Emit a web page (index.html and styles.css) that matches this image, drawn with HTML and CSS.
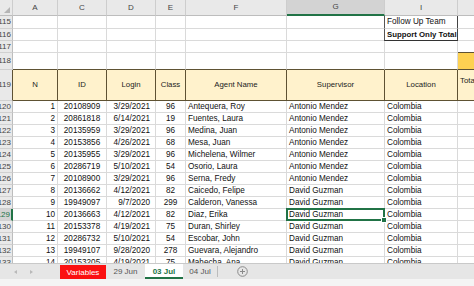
FILE: index.html
```html
<!DOCTYPE html>
<html lang="en">
<head>
    <meta charset="UTF-8">
    <meta name="viewport" content="width=device-width, initial-scale=1.0">
    <title>Follow Up - 03 Jul</title>
    <link rel="stylesheet" href="styles.css">
</head>
<body>
    <div class="book">
        <div class="sheet">
            <div class="row cols">
                <div class="corner"><span class="tri"></span></div>
                <div>A</div><div>C</div><div>D</div><div>E</div><div>F</div>
                <div class="sel">G</div><div>I</div><div></div>
            </div>

            <div class="row h13">
                <div class="rh">115</div>
                <div></div><div></div><div></div><div></div><div></div><div></div>
                <div class="tx box">Follow Up Team</div><div></div>
            </div>
            <div class="row">
                <div class="rh">116</div>
                <div></div><div></div><div></div><div></div><div></div><div></div>
                <div class="tx box strong">Support Only Total</div><div></div>
            </div>
            <div class="row">
                <div class="rh">117</div>
                <div></div><div></div><div></div><div></div><div></div><div></div><div></div>
                <div class="total-top"></div>
            </div>
            <div class="row h17 above-head">
                <div class="rh">118</div>
                <div></div><div></div><div></div><div></div><div></div><div></div><div></div>
                <div class="total"></div>
            </div>
            <div class="row h31 head">
                <div class="rh">119</div>
                <div>N</div><div>ID</div><div>Login</div><div>Class</div>
                <div>Agent Name</div><div>Supervisor</div><div>Location</div>
                <div class="total label">Total Hours</div>
            </div>

            <div class="row">
                <div class="rh">120</div>
                <div class="n">1</div><div class="id">20108909</div><div class="dt">3/29/2021</div><div class="cl">96</div>
                <div class="tx">Antequera, Roy</div><div class="tx">Antonio Mendez</div><div class="tx">Colombia</div><div></div>
            </div>
            <div class="row">
                <div class="rh">121</div>
                <div class="n">2</div><div class="id">20861818</div><div class="dt">6/14/2021</div><div class="cl">19</div>
                <div class="tx">Fuentes, Laura</div><div class="tx">Antonio Mendez</div><div class="tx">Colombia</div><div></div>
            </div>
            <div class="row">
                <div class="rh">122</div>
                <div class="n">3</div><div class="id">20135959</div><div class="dt">3/29/2021</div><div class="cl">96</div>
                <div class="tx">Medina, Juan</div><div class="tx">Antonio Mendez</div><div class="tx">Colombia</div><div></div>
            </div>
            <div class="row">
                <div class="rh">123</div>
                <div class="n">4</div><div class="id">20153856</div><div class="dt">4/26/2021</div><div class="cl">68</div>
                <div class="tx">Mesa, Juan</div><div class="tx">Antonio Mendez</div><div class="tx">Colombia</div><div></div>
            </div>
            <div class="row">
                <div class="rh">124</div>
                <div class="n">5</div><div class="id">20135955</div><div class="dt">3/29/2021</div><div class="cl">96</div>
                <div class="tx">Michelena, Wilmer</div><div class="tx">Antonio Mendez</div><div class="tx">Colombia</div><div></div>
            </div>
            <div class="row">
                <div class="rh">125</div>
                <div class="n">6</div><div class="id">20286719</div><div class="dt">5/10/2021</div><div class="cl">54</div>
                <div class="tx">Osorio, Laura</div><div class="tx">Antonio Mendez</div><div class="tx">Colombia</div><div></div>
            </div>
            <div class="row">
                <div class="rh">126</div>
                <div class="n">7</div><div class="id">20108900</div><div class="dt">3/29/2021</div><div class="cl">96</div>
                <div class="tx">Serna, Fredy</div><div class="tx">Antonio Mendez</div><div class="tx">Colombia</div><div></div>
            </div>
            <div class="row">
                <div class="rh">127</div>
                <div class="n">8</div><div class="id">20136662</div><div class="dt">4/12/2021</div><div class="cl">82</div>
                <div class="tx">Caicedo, Felipe</div><div class="tx">David Guzman</div><div class="tx">Colombia</div><div></div>
            </div>
            <div class="row">
                <div class="rh">128</div>
                <div class="n">9</div><div class="id">19949097</div><div class="dt">9/7/2020</div><div class="cl">299</div>
                <div class="tx">Calderon, Vanessa</div><div class="tx">David Guzman</div><div class="tx">Colombia</div><div></div>
            </div>
            <div class="row">
                <div class="rh sel">129</div>
                <div class="n">10</div><div class="id">20136663</div><div class="dt">4/12/2021</div><div class="cl">82</div>
                <div class="tx">Diaz, Erika</div><div class="tx cur">David Guzman</div><div class="tx">Colombia</div><div></div>
            </div>
            <div class="row">
                <div class="rh">130</div>
                <div class="n">11</div><div class="id">20153378</div><div class="dt">4/19/2021</div><div class="cl">75</div>
                <div class="tx">Duran, Shirley</div><div class="tx">David Guzman</div><div class="tx">Colombia</div><div></div>
            </div>
            <div class="row">
                <div class="rh">131</div>
                <div class="n">12</div><div class="id">20286732</div><div class="dt">5/10/2021</div><div class="cl">54</div>
                <div class="tx">Escobar, John</div><div class="tx">David Guzman</div><div class="tx">Colombia</div><div></div>
            </div>
            <div class="row">
                <div class="rh">132</div>
                <div class="n">13</div><div class="id">19949107</div><div class="dt">9/28/2020</div><div class="cl">278</div>
                <div class="tx">Guevara, Alejandro</div><div class="tx">David Guzman</div><div class="tx">Colombia</div><div></div>
            </div>
            <div class="row">
                <div class="rh">133</div>
                <div class="n">14</div><div class="id">20153205</div><div class="dt">4/19/2021</div><div class="cl">75</div>
                <div class="tx">Mahecha, Ana</div><div class="tx">David Guzman</div><div class="tx">Colombia</div><div></div>
            </div>
        </div>

        <div class="tabbar">
            <div class="strip">
                <div class="nav"><span class="arr left"></span><span class="arr right"></span></div>
                <div class="tab red">Variables</div>
                <div class="tab t29">29 Jun</div>
                <div class="tab active">03 Jul</div>
                <div class="tab t04">04 Jul</div>
                <div class="add">
                    <svg width="11" height="11" viewBox="0 0 11 11">
                        <circle cx="5.5" cy="5.5" r="4.8" fill="none" stroke="#8a8a8a" stroke-width="1"/>
                        <path d="M5.5 3v5M3 5.5h5" stroke="#8a8a8a" stroke-width="1"/>
                    </svg>
                </div>
            </div>
            <div class="status"></div>
        </div>
    </div>
</body>
</html>
```

FILE: styles.css
```css
* {
    box-sizing: border-box;
}

body {
    margin: 0;
    font-family: "Liberation Sans", Arial, sans-serif;
    background-color: #fff;
}

.book {
    width: 474px;
    height: 286px;
    overflow: hidden;
    display: flex;
    flex-direction: column;
}

.sheet {
    height: 263px;
    flex: none;
    overflow: hidden;
}

.row {
    display: grid;
    grid-template-columns: 13px 45px 49px 49px 30px 101px 98px 73px 80px;
    height: 12px;
}

.row > div {
    display: flex;
    align-items: center;
    overflow: hidden;
    white-space: nowrap;
    border-right: 1px solid #dadada;
    border-bottom: 1px solid #dadada;
    font-size: 8.2px;
    line-height: 10px;
    color: #111;
}

.h13 { height: 13px; }
.h17 { height: 17px; }
.h31 { height: 31px; }

/* column letters */
.cols {
    height: 16px;
}

.cols > div {
    justify-content: center;
    background-color: #e9e9e9;
    border-right-color: #cdcdcd;
    border-bottom-color: #bdbdbd;
    color: #444;
    font-size: 8px;
}

.cols > .sel {
    background-color: #d3d3d3;
    border-bottom: 2px solid #217346;
}

.corner {
    justify-content: flex-end !important;
    align-items: flex-end !important;
    padding: 0 2px 2px 0;
}

.tri {
    width: 0;
    height: 0;
    border-left: 6px solid transparent;
    border-bottom: 6px solid #b5b5b5;
}

/* row numbers */
.row > .rh {
    justify-content: flex-end;
    padding-right: 1px;
    background-color: #e9e9e9;
    border-right-color: #bdbdbd;
    border-bottom-color: #d0d0d0;
    color: #444;
    font-size: 8px;
}

.row > .rh.sel {
    background-color: #d3d3d3;
    border-right: 2px solid #217346;
    color: #217346;
}

/* cell alignment */
.n { justify-content: flex-end; padding-right: 2px; }
.id { justify-content: center; }
.dt { justify-content: flex-end; padding-right: 5px; }
.cl { justify-content: center; }
.tx { padding-left: 2px; }

.row > .box {
    border-left: 1px solid #555;
    border-right-color: #444;
    margin-left: -1px;
}

.row > .strong {
    font-weight: bold;
    font-size: 7.8px;
    border-bottom-color: #333;
}

/* header row */
.above-head > div:not(.rh) {
    border-bottom-color: #5e5233;
}

.head > div:not(.rh) {
    justify-content: center;
    background-color: #fff2cc;
    border-right-color: #5e5233;
    border-bottom-color: #5e5233;
    font-size: 7.8px;
    color: #222;
}

.head > .rh {
    border-right-color: #5e5233;
}

.row > .total-top {
    border-bottom-color: #5e5233;
}

.row > .total,
.head > .total {
    background-color: #fdd152;
    border-bottom-color: #fdd152;
}

.head > .total.label {
    justify-content: flex-start;
    align-items: flex-start;
    padding: 6px 0 0 2px;
    border-bottom-color: #5e5233;
}

/* active cell */
.row > .cur {
    position: relative;
    overflow: visible;
}

.cur::after {
    content: '';
    position: absolute;
    left: -1px;
    top: -1px;
    right: -1px;
    bottom: -1px;
    border: 2px solid #217346;
}

.cur::before {
    content: '';
    position: absolute;
    right: -3px;
    bottom: -3px;
    width: 4px;
    height: 4px;
    background-color: #217346;
    border: 1px solid #fff;
    z-index: 1;
}

/* sheet tabs */
.tabbar {
    flex: 1;
    display: flex;
    flex-direction: column;
    border-top: 1px solid #c9c9c9;
    background-color: #f4f4f4;
}

.strip {
    height: 15px;
    display: flex;
    align-items: stretch;
    background-color: #e6e6e6;
}

.nav {
    width: 60px;
    display: flex;
    align-items: center;
    gap: 13px;
    padding-left: 14px;
}

.arr {
    width: 0;
    height: 0;
    border-top: 2.5px solid transparent;
    border-bottom: 2.5px solid transparent;
}

.arr.left { border-right: 3px solid #b9b9b9; }
.arr.right { border-left: 3px solid #b9b9b9; }

.tab {
    display: flex;
    align-items: center;
    justify-content: center;
    font-size: 8px;
    color: #555;
}

.tab.red {
    width: 46px;
    margin-top: 1px;
    background-color: #fb1010;
    color: #fff;
}

.t29 { width: 39px; }

.tab.active {
    width: 38px;
    background-color: #fff;
    border-bottom: 2px solid #217346;
    color: #217346;
    font-weight: bold;
    padding-top: 1px;
}

.t04 {
    width: 35px;
    margin: 2px 0;
    border-right: 1px solid #bcbcbc;
}

.add {
    display: flex;
    align-items: center;
    margin-left: 19px;
}

.status {
    flex: 1;
}
```
